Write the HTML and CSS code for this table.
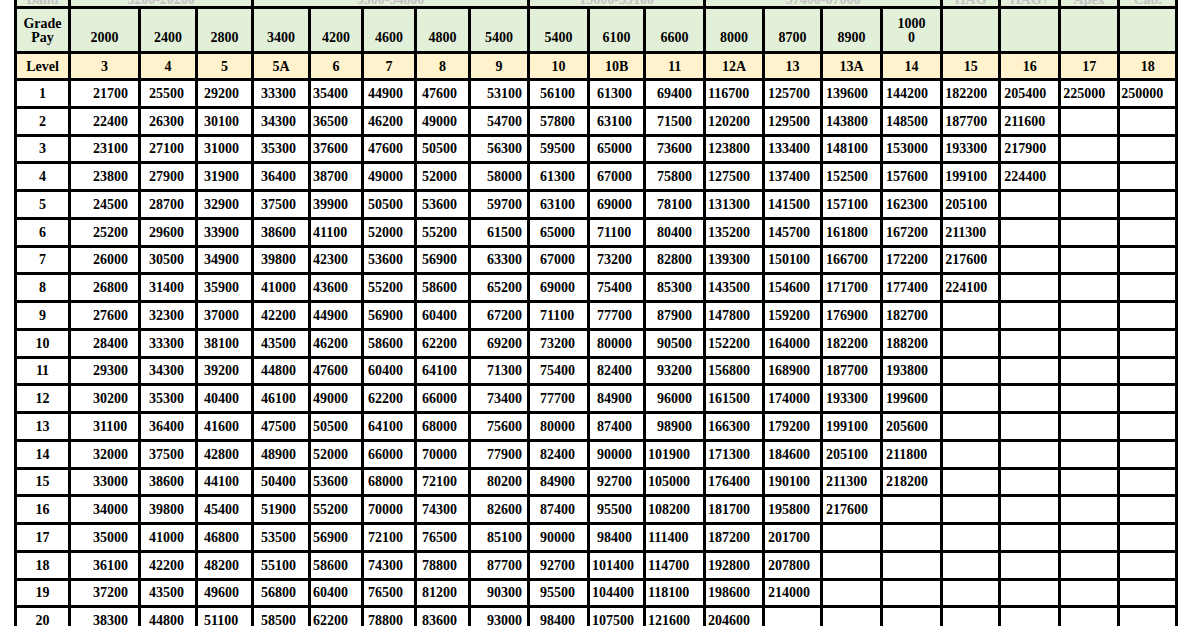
FILE: index.html
```html
<!DOCTYPE html>
<html lang="en">
<head>
<meta charset="utf-8">
<title>Pay Matrix</title>
<link rel="stylesheet" href="styles.css">
</head>
<body>
<div class="page">
<table class="matrix">
<colgroup>
<col class="c54"><col class="c70"><col class="c57"><col class="c56"><col class="c57"><col class="c53"><col class="c53"><col class="c54"><col class="c59"><col class="c60"><col class="c56"><col class="c60"><col class="c59"><col class="c58"><col class="c60"><col class="c60"><col class="c58"><col class="c60"><col class="c59"><col class="c58">
</colgroup>
<tbody>
<tr class="band">
<td>Band</td><td colspan="3">5200-20200</td><td colspan="5">9300-34800</td><td colspan="3">15600-39100</td><td colspan="4">37400-67000</td><td>HAG</td><td>HAG+</td><td>Apex</td><td>Cab.</td>
</tr>
<tr class="grade">
<td>Grade<br>Pay</td><td>2000</td><td>2400</td><td>2800</td><td>3400</td><td>4200</td><td>4600</td><td>4800</td><td>5400</td><td>5400</td><td>6100</td><td>6600</td><td>8000</td><td>8700</td><td>8900</td><td>1000<br>0</td><td></td><td></td><td></td><td></td>
</tr>
<tr class="level">
<td>Level</td><td>3</td><td>4</td><td>5</td><td>5A</td><td>6</td><td>7</td><td>8</td><td>9</td><td>10</td><td>10B</td><td>11</td><td>12A</td><td>13</td><td>13A</td><td>14</td><td>15</td><td>16</td><td>17</td><td>18</td>
</tr>
<tr class="row"><td>1</td><td>21700</td><td>25500</td><td>29200</td><td>33300</td><td>35400</td><td>44900</td><td>47600</td><td>53100</td><td>56100</td><td>61300</td><td>69400</td><td>116700</td><td>125700</td><td>139600</td><td>144200</td><td>182200</td><td>205400</td><td>225000</td><td>250000</td></tr>
<tr class="row"><td>2</td><td>22400</td><td>26300</td><td>30100</td><td>34300</td><td>36500</td><td>46200</td><td>49000</td><td>54700</td><td>57800</td><td>63100</td><td>71500</td><td>120200</td><td>129500</td><td>143800</td><td>148500</td><td>187700</td><td>211600</td><td></td><td></td></tr>
<tr class="row"><td>3</td><td>23100</td><td>27100</td><td>31000</td><td>35300</td><td>37600</td><td>47600</td><td>50500</td><td>56300</td><td>59500</td><td>65000</td><td>73600</td><td>123800</td><td>133400</td><td>148100</td><td>153000</td><td>193300</td><td>217900</td><td></td><td></td></tr>
<tr class="row"><td>4</td><td>23800</td><td>27900</td><td>31900</td><td>36400</td><td>38700</td><td>49000</td><td>52000</td><td>58000</td><td>61300</td><td>67000</td><td>75800</td><td>127500</td><td>137400</td><td>152500</td><td>157600</td><td>199100</td><td>224400</td><td></td><td></td></tr>
<tr class="row"><td>5</td><td>24500</td><td>28700</td><td>32900</td><td>37500</td><td>39900</td><td>50500</td><td>53600</td><td>59700</td><td>63100</td><td>69000</td><td>78100</td><td>131300</td><td>141500</td><td>157100</td><td>162300</td><td>205100</td><td></td><td></td><td></td></tr>
<tr class="row"><td>6</td><td>25200</td><td>29600</td><td>33900</td><td>38600</td><td>41100</td><td>52000</td><td>55200</td><td>61500</td><td>65000</td><td>71100</td><td>80400</td><td>135200</td><td>145700</td><td>161800</td><td>167200</td><td>211300</td><td></td><td></td><td></td></tr>
<tr class="row"><td>7</td><td>26000</td><td>30500</td><td>34900</td><td>39800</td><td>42300</td><td>53600</td><td>56900</td><td>63300</td><td>67000</td><td>73200</td><td>82800</td><td>139300</td><td>150100</td><td>166700</td><td>172200</td><td>217600</td><td></td><td></td><td></td></tr>
<tr class="row"><td>8</td><td>26800</td><td>31400</td><td>35900</td><td>41000</td><td>43600</td><td>55200</td><td>58600</td><td>65200</td><td>69000</td><td>75400</td><td>85300</td><td>143500</td><td>154600</td><td>171700</td><td>177400</td><td>224100</td><td></td><td></td><td></td></tr>
<tr class="row"><td>9</td><td>27600</td><td>32300</td><td>37000</td><td>42200</td><td>44900</td><td>56900</td><td>60400</td><td>67200</td><td>71100</td><td>77700</td><td>87900</td><td>147800</td><td>159200</td><td>176900</td><td>182700</td><td></td><td></td><td></td><td></td></tr>
<tr class="row"><td>10</td><td>28400</td><td>33300</td><td>38100</td><td>43500</td><td>46200</td><td>58600</td><td>62200</td><td>69200</td><td>73200</td><td>80000</td><td>90500</td><td>152200</td><td>164000</td><td>182200</td><td>188200</td><td></td><td></td><td></td><td></td></tr>
<tr class="row"><td>11</td><td>29300</td><td>34300</td><td>39200</td><td>44800</td><td>47600</td><td>60400</td><td>64100</td><td>71300</td><td>75400</td><td>82400</td><td>93200</td><td>156800</td><td>168900</td><td>187700</td><td>193800</td><td></td><td></td><td></td><td></td></tr>
<tr class="row"><td>12</td><td>30200</td><td>35300</td><td>40400</td><td>46100</td><td>49000</td><td>62200</td><td>66000</td><td>73400</td><td>77700</td><td>84900</td><td>96000</td><td>161500</td><td>174000</td><td>193300</td><td>199600</td><td></td><td></td><td></td><td></td></tr>
<tr class="row"><td>13</td><td>31100</td><td>36400</td><td>41600</td><td>47500</td><td>50500</td><td>64100</td><td>68000</td><td>75600</td><td>80000</td><td>87400</td><td>98900</td><td>166300</td><td>179200</td><td>199100</td><td>205600</td><td></td><td></td><td></td><td></td></tr>
<tr class="row"><td>14</td><td>32000</td><td>37500</td><td>42800</td><td>48900</td><td>52000</td><td>66000</td><td>70000</td><td>77900</td><td>82400</td><td>90000</td><td class="w">101900</td><td>171300</td><td>184600</td><td>205100</td><td>211800</td><td></td><td></td><td></td><td></td></tr>
<tr class="row"><td>15</td><td>33000</td><td>38600</td><td>44100</td><td>50400</td><td>53600</td><td>68000</td><td>72100</td><td>80200</td><td>84900</td><td>92700</td><td class="w">105000</td><td>176400</td><td>190100</td><td>211300</td><td>218200</td><td></td><td></td><td></td><td></td></tr>
<tr class="row"><td>16</td><td>34000</td><td>39800</td><td>45400</td><td>51900</td><td>55200</td><td>70000</td><td>74300</td><td>82600</td><td>87400</td><td>95500</td><td class="w">108200</td><td>181700</td><td>195800</td><td>217600</td><td></td><td></td><td></td><td></td><td></td></tr>
<tr class="row"><td>17</td><td>35000</td><td>41000</td><td>46800</td><td>53500</td><td>56900</td><td>72100</td><td>76500</td><td>85100</td><td>90000</td><td>98400</td><td class="w">111400</td><td>187200</td><td>201700</td><td></td><td></td><td></td><td></td><td></td><td></td></tr>
<tr class="row"><td>18</td><td>36100</td><td>42200</td><td>48200</td><td>55100</td><td>58600</td><td>74300</td><td>78800</td><td>87700</td><td>92700</td><td class="w">101400</td><td class="w">114700</td><td>192800</td><td>207800</td><td></td><td></td><td></td><td></td><td></td><td></td></tr>
<tr class="row"><td>19</td><td>37200</td><td>43500</td><td>49600</td><td>56800</td><td>60400</td><td>76500</td><td>81200</td><td>90300</td><td>95500</td><td class="w">104400</td><td class="w">118100</td><td>198600</td><td>214000</td><td></td><td></td><td></td><td></td><td></td><td></td></tr>
<tr class="row"><td>20</td><td>38300</td><td>44800</td><td>51100</td><td>58500</td><td>62200</td><td>78800</td><td>83600</td><td>93000</td><td>98400</td><td class="w">107500</td><td class="w">121600</td><td>204600</td><td></td><td></td><td></td><td></td><td></td><td></td><td></td></tr>
</tbody>
</table>
</div>
</body>
</html>
```

FILE: styles.css
```css
* {
  box-sizing: border-box;
}

html,
body {
  margin: 0;
  padding: 0;
  background: #ffffff;
}

body {
  font-family: "Liberation Serif", "Times New Roman", serif;
  font-weight: bold;
  font-size: 14px;
  color: #000000;
}

.page {
  padding-left: 14px;
  height: 626px;
  overflow: hidden;
}

.matrix {
  border-collapse: separate;
  border-spacing: 0;
  table-layout: fixed;
  width: 1164px;
  margin-top: -23.7px;
  border-top: 3px solid #000;
  border-left: 3px solid #000;
}

.c53 { width: 53px; }
.c54 { width: 54px; }
.c56 { width: 56px; }
.c57 { width: 57px; }
.c58 { width: 58px; }
.c59 { width: 59px; }
.c60 { width: 60px; }
.c70 { width: 70px; }

.matrix td {
  border-right: 3px solid #000;
  border-bottom: 3px solid #000;
  padding: 0;
  line-height: 15px;
  white-space: nowrap;
  overflow: hidden;
}

/* partially visible band row at the top edge */
.band td {
  height: 30px;
  background: #e2efd9;
  color: #c2c2c2;
  text-align: center;
  vertical-align: bottom;
  line-height: 11px;
  padding-bottom: 1px;
}

.grade td {
  height: 45px;
  background: #e2efd9;
  text-align: center;
  vertical-align: bottom;
  line-height: 14.3px;
  padding-bottom: 6px;
}

.level td {
  height: 26.7px;
  background: #fff2cc;
  text-align: center;
  vertical-align: middle;
}

.row td {
  height: 27.75px;
  background: #ffffff;
  text-align: left;
  vertical-align: middle;
}

.row td:nth-child(1) { text-align: center; }
.row td:nth-child(2) { padding-left: 22px; }
.row td:nth-child(3) { padding-left: 8px; }
.row td:nth-child(4) { padding-left: 6px; }
.row td:nth-child(5) { padding-left: 7px; }
.row td:nth-child(6) { padding-left: 2px; }
.row td:nth-child(7) { padding-left: 4px; }
.row td:nth-child(8) { padding-left: 5px; }
.row td:nth-child(9) { padding-left: 16px; }
.row td:nth-child(10) { padding-left: 10px; }
.row td:nth-child(11) { padding-left: 7px; }
.row td:nth-child(12) { padding-left: 11px; }
.row td:nth-child(13) { padding-left: 2px; }
.row td:nth-child(14) { padding-left: 3px; }
.row td:nth-child(15) { padding-left: 3px; }
.row td:nth-child(16) { padding-left: 3px; }
.row td:nth-child(17) { padding-left: 2px; }
.row td:nth-child(18) { padding-left: 3px; }
.row td:nth-child(19) { padding-left: 2px; }
.row td:nth-child(20) { padding-left: 1px; }

.matrix .row td.w { padding-left: 2px; }
```
